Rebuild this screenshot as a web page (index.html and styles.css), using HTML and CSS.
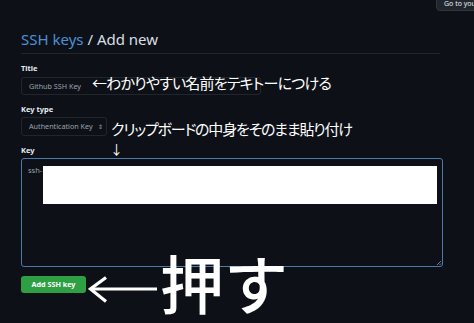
FILE: index.html
```html
<!DOCTYPE html>
<html lang="ja">
<head>
<meta charset="utf-8">
<link rel="stylesheet" href="styles.css">
</head>
<body>
<div class="goto">Go to your profile</div>
<main class="page">
  <h2 class="heading"><span class="crumb">SSH keys</span> / Add new</h2>
  <div class="field">
    <div class="label">Title</div>
    <div class="input">Github SSH Key</div>
  </div>
  <div class="field">
    <div class="label">Key type</div>
    <div class="select">Authentication Key <span class="caret">&#8661;</span></div>
  </div>
  <div class="field">
    <div class="label">Key</div>
    <div class="textarea">
      <span class="ssh">ssh-</span>
      <div class="mask"></div>
      <svg class="grip" width="6" height="6" viewBox="0 0 6 6"><path d="M5 1 L1 5 M5 3.5 L3.5 5" stroke="#5d7fa8" stroke-width="1"/></svg>
    </div>
  </div>
  <div class="btn">Add SSH key</div>

  <div class="note note1">←わかりやすい名前をテキトーにつける</div>
  <div class="note note2">クリップボードの中身をそのまま貼り付け</div>
  <div class="note down">↓</div>
  <svg class="bigarrow" width="70" height="28" viewBox="0 0 70 28">
    <path d="M3 13 H69" stroke="#fff" stroke-width="3.2"/>
    <path d="M18 1.5 L2.5 13 L18 25.5" fill="none" stroke="#fff" stroke-width="3.2" stroke-linejoin="miter"/>
  </svg>
  <div class="push">押す</div>
</main>
</body>
</html>
```

FILE: styles.css
```css
html, body {
  margin: 0;
  padding: 0;
  background: #0d1117;
  width: 474px;
  height: 323px;
  overflow: hidden;
  font-family: "Noto Sans", "Open Sans", sans-serif;
  color: #e6edf3;
}

.goto {
  position: absolute;
  top: -5px;
  left: 436px;
  padding: 3px 6px 2px 7px;
  background: #21262d;
  border: 1px solid #30363d;
  border-radius: 4px;
  font-size: 7px;
  color: #e6edf3;
  white-space: nowrap;
}

.page {
  position: relative;
  width: 422px;
  padding: 29px 0 0 21px;
}

.heading {
  margin: 0;
  font-weight: 400;
  font-size: 15px;
  line-height: 20px;
  color: #d9dee4;
  padding-bottom: 4px;
  border-bottom: 1px solid #21262d;
  width: 419px;
}

.crumb {
  color: #4d8fd6;
}

.field {
  display: flex;
  flex-direction: column;
}

.label {
  font-size: 7.5px;
  font-weight: 700;
  line-height: 10px;
  color: #e6edf3;
}

.field:nth-of-type(1) .label { margin-top: 9px; }

.input {
  margin-top: 4px;
  width: 240px;
  height: 18px;
  box-sizing: border-box;
  border: 1px solid #21262d;
  border-radius: 3px;
  padding-left: 7px;
  font-size: 7.2px;
  line-height: 16px;
  color: #9aa3ad;
}

.field:nth-of-type(2) .label { margin-top: 9px; }

.select {
  margin-top: 3px;
  width: 86px;
  height: 19px;
  box-sizing: border-box;
  border: 1px solid #21262d;
  border-radius: 3px;
  padding-left: 7px;
  font-size: 7.2px;
  line-height: 17px;
  color: #9aa3ad;
  white-space: nowrap;
}

.caret {
  font-size: 6px;
  margin-left: 3px;
}

.field:nth-of-type(3) .label { margin-top: 9px; }

.textarea {
  position: relative;
  margin-top: 3px;
  width: 422px;
  height: 109px;
  box-sizing: border-box;
  border: 1px solid #4f79aa;
  border-radius: 3px;
  padding: 5px 0 0 6px;
  font-size: 7.5px;
  color: #9aa3ad;
}

.ssh {
  line-height: 12px;
}

.mask {
  position: absolute;
  left: 21px;
  top: 7px;
  width: 394px;
  height: 38px;
  background: #fff;
}

.grip {
  position: absolute;
  right: 0;
  bottom: 0;
}

.btn {
  margin-top: 9px;
  width: 65px;
  height: 17px;
  background: #2ea043;
  border-radius: 3px;
  color: #fff;
  font-size: 7.2px;
  font-weight: 700;
  line-height: 17px;
  text-align: center;
}

.note {
  position: absolute;
  font-family: "Noto Sans CJK JP", sans-serif;
  color: #fff;
  white-space: nowrap;
  font-feature-settings: "palt";
}

.note1 {
  left: 92px;
  top: 73px;
  font-size: 15px;
  line-height: 20px;
  letter-spacing: -0.8px;
}

.note2 {
  left: 111px;
  top: 119px;
  font-size: 15px;
  line-height: 20px;
  letter-spacing: -1.2px;
}

.down {
  left: 110px;
  top: 139px;
  font-size: 13px;
  line-height: 20px;
  font-feature-settings: normal;
}

.bigarrow {
  position: absolute;
  left: 88px;
  top: 276px;
}

.push {
  position: absolute;
  left: 160px;
  top: 236px;
  font-family: "Noto Sans CJK JP", sans-serif;
  font-size: 64px;
  line-height: 90px;
  font-weight: 500;
  color: #fff;
  white-space: nowrap;
}
```
